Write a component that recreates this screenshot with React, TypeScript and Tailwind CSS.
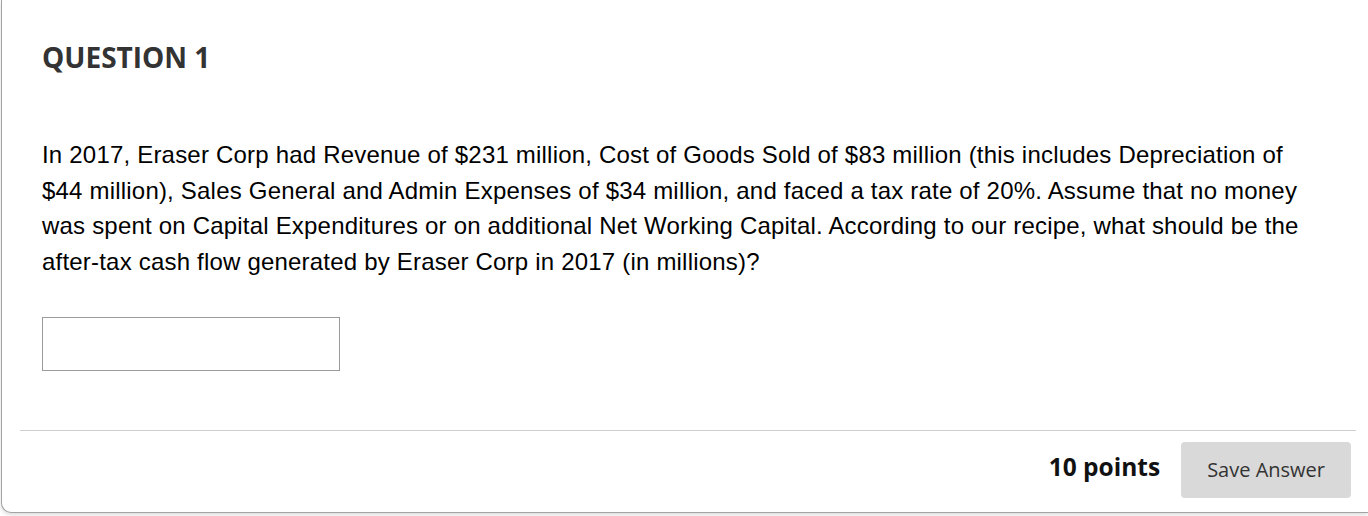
export default function App() {
  return (
    <div className="w-[1368px] h-[516px] overflow-hidden bg-white">
      <div className="ml-px border-l border-b border-[#a3a3a3] rounded-bl-[10px] bg-white shadow-[0_2px_4px_rgba(0,0,0,0.14)]">
        {/* Question body */}
        <div className="pl-[40px] pt-[43px]">
          <h2 className="font-['Open_Sans',sans-serif] font-bold text-[28px] leading-[28px] text-[#333]">
            QUESTION 1
          </h2>
          <p className="mt-[66px] w-[1270px] font-['Liberation_Sans',Arial,sans-serif] text-[24px] leading-[35.65px] tracking-[0.2px] text-black">
            In 2017, Eraser Corp had Revenue of $231 million, Cost of Goods Sold of $83 million (this includes Depreciation of
            $44 million), Sales General and Admin Expenses of $34 million, and faced a tax rate of 20%. Assume that no money
            was spent on Capital Expenditures or on additional Net Working Capital. According to our recipe, what should be the
            after-tax cash flow generated by Eraser Corp in 2017 (in millions)?
          </p>
          <input
            type="text"
            className="mt-[37px] block w-[298px] h-[54px] border border-[#9a9a9a] bg-white outline-none"
          />
        </div>

        {/* Footer */}
        <div className="mt-[59px] ml-[18px] w-[1336px] h-px bg-[#cfcfcf]" />
        <div className="flex justify-end items-start gap-[21px] pr-[17px] pt-[11px] pb-[14px]">
          <span className="mt-[13px] font-['Open_Sans',sans-serif] font-bold text-[24.5px] leading-[24px] text-[#111]">
            10 points
          </span>
          <button className="h-[56px] px-[26px] rounded-[4px] bg-[#d9d9d9] font-['Open_Sans',sans-serif] text-[20px] text-[#333]">
            Save Answer
          </button>
        </div>
      </div>
    </div>
  )
}
